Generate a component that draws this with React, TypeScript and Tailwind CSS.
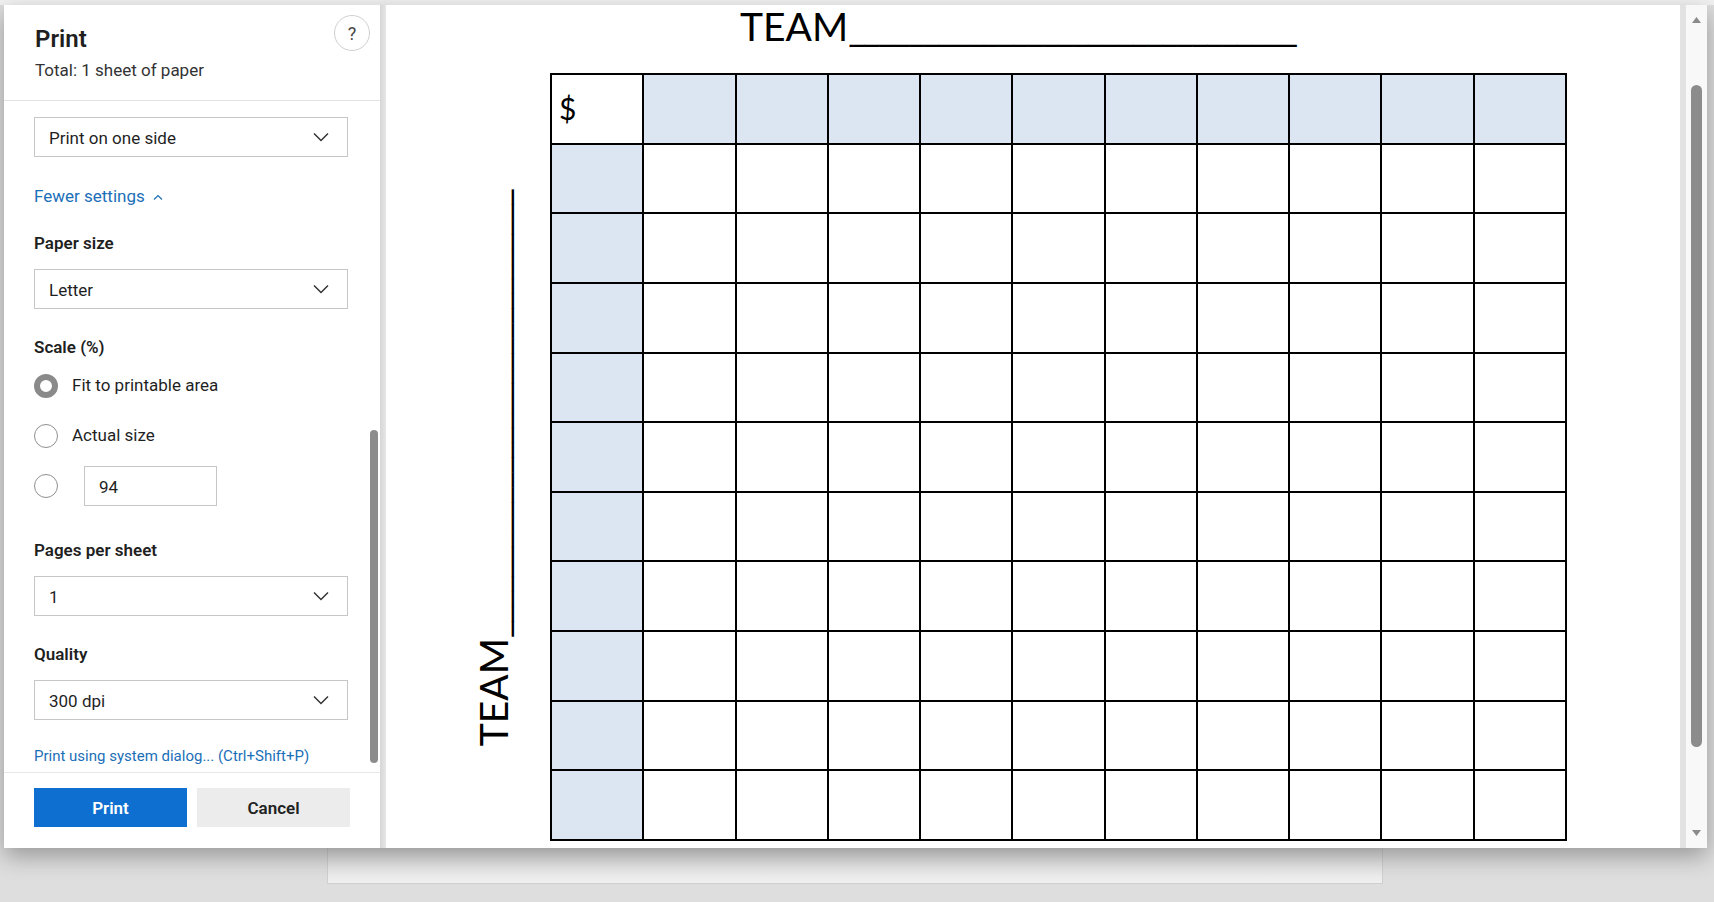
import React from "react";

const UI = "font-['Roboto','Liberation_Sans',sans-serif]";
const DOC = "font-['Lato','Open_Sans',sans-serif]";
const LINE = "______________________________";

function Chevron() {
  return (
    <svg width="16" height="10" viewBox="0 0 16 10" fill="none">
      <polyline points="1,1.5 8,8.5 15,1.5" stroke="#333" strokeWidth="1.5" />
    </svg>
  );
}

function Select({ value }: { value: string }) {
  return (
    <div className="flex h-[40px] w-[314px] items-center justify-between border border-[#c6c6c6] bg-white pl-[14px] pr-[18px] text-[17px] text-[#1f1f1f]">
      <span className="mt-[4px]">{value}</span>
      <Chevron />
    </div>
  );
}

function Label({ children, top = 26 }: { children: React.ReactNode; top?: number }) {
  return (
    <div
      className={`${top === 32 ? "mt-[32px]" : "mt-[26px]"} h-[24px] text-[17px] font-semibold leading-[24px] text-[#1f1f1f]`}
    >
      {children}
    </div>
  );
}

function Radio({ on }: { on?: boolean }) {
  return on ? (
    <div className="h-[24px] w-[24px] rounded-full border-[6px] border-[#8a8a8a] bg-white" />
  ) : (
    <div className="h-[24px] w-[24px] rounded-full border border-[#8f8f8f] bg-white" />
  );
}

function Team() {
  return (
    <>
      TEAM<span className="tracking-[-3px]">{LINE}</span>
    </>
  );
}

export default function App() {
  return (
    <div className={`${UI} relative h-[902px] w-[1714px] overflow-hidden bg-[#dedede]`}>
      <div className="h-[5px] w-full bg-[#f2f2f2]" />
      <div className="relative z-10 ml-[4px] flex h-[843px] w-[1703px] bg-white shadow-[0_8px_22px_rgba(0,0,0,0.32)]">
        {/* settings panel */}
        <div className="flex w-[376px] flex-col">
          <div className="flex h-[95px] justify-between pl-[31px] pr-[10px] pt-[10px]">
            <div className="mt-[8px]">
              <div className="text-[24px] font-semibold leading-[32px] text-[#1f1f1f]">Print</div>
              <div className="mt-[4px] text-[17px] leading-[22px] text-[#333]">Total: 1 sheet of paper</div>
            </div>
            <div className="flex h-[36px] w-[36px] items-center justify-center rounded-full border border-[#cfcfcf] text-[18px] text-[#444]">
              ?
            </div>
          </div>
          <div className="h-px bg-[#e3e3e3]" />
          <div className="flex flex-1 justify-between">
            <div className="w-[344px] pl-[30px] pt-[16px]">
              <Select value="Print on one side" />
              <div className="mt-[28px] flex h-[24px] items-center gap-[8px] text-[17px] text-[#1b6fb8]">
                <span>Fewer settings</span>
                <svg width="10" height="6" viewBox="0 0 10 6" fill="none">
                  <polyline points="1,5.5 5,1.5 9,5.5" stroke="#1b6fb8" strokeWidth="1.2" />
                </svg>
              </div>
              <div className="mt-[22px] h-[24px] text-[17px] font-semibold leading-[24px] text-[#1f1f1f]">Paper size</div>
              <div className="mt-[14px]">
                <Select value="Letter" />
              </div>
              <Label>Scale (%)</Label>
              <div className="mt-[7px] flex flex-col gap-[10px] text-[17px] text-[#1f1f1f]">
                <div className="flex h-[40px] items-center">
                  <Radio on />
                  <span className="ml-[14px]">Fit to printable area</span>
                </div>
                <div className="flex h-[40px] items-center">
                  <Radio />
                  <span className="ml-[14px]">Actual size</span>
                </div>
                <div className="flex h-[40px] items-center">
                  <Radio />
                  <div className="ml-[26px] flex h-[40px] w-[133px] items-center border border-[#c6c6c6] pl-[14px] pt-[3px]">94</div>
                </div>
              </div>
              <Label top={32}>Pages per sheet</Label>
              <div className="mt-[14px]">
                <Select value="1" />
              </div>
              <Label>Quality</Label>
              <div className="mt-[14px]">
                <Select value="300 dpi" />
              </div>
              <div className="mt-[26px] text-[15px] leading-[20px] text-[#1b6fb8]">Print using system dialog... (Ctrl+Shift+P)</div>
            </div>
            <div className="mr-[2px] w-[8px]">
              <div className="mt-[329px] h-[333px] rounded-full bg-[#8c8c8c]" />
            </div>
          </div>
          <div className="h-px bg-[#e8e8e8]" />
          <div className="flex h-[75px] gap-[10px] px-[30px] pt-[15px]">
            <div className="flex h-[39px] flex-1 items-center justify-center bg-[#0f6fd0] pt-[3px] text-[17px] font-semibold text-white">Print</div>
            <div className="flex h-[39px] flex-1 items-center justify-center bg-[#ececec] pt-[3px] text-[17px] font-semibold text-[#222]">Cancel</div>
          </div>
        </div>

        <div className="w-[6px] bg-gradient-to-r from-[#d6d6d6] to-[#e6e6e6]" />

        {/* preview */}
        <div className={`${DOC} flex flex-1 flex-col pt-[2px] text-black`}>
          <div className="ml-[354px] h-[39px] whitespace-nowrap text-[39px] leading-none">
            <Team />
          </div>
          <div className="mt-[27px] flex">
            <div className="ml-[88px] mt-[118px] h-fit rotate-180 whitespace-nowrap text-[39px] leading-none [writing-mode:vertical-rl]">
              <Team />
            </div>
            <div className="ml-[37px] grid h-[768px] w-[1017px] grid-cols-11 grid-rows-11 gap-[2px] border-2 border-black bg-black">
              <div className="flex items-center bg-white pl-[7px] text-[30px]">$</div>
              {Array.from({ length: 10 }).map((_, i) => (
                <div key={"h" + i} className="bg-[#dce6f2]" />
              ))}
              {Array.from({ length: 10 }).map((_, r) =>
                Array.from({ length: 11 }).map((_, c) => (
                  <div key={r + "-" + c} className={c === 0 ? "bg-[#dce6f2]" : "bg-white"} />
                ))
              )}
            </div>
          </div>
        </div>

        {/* preview scrollbar */}
        <div className="flex w-[27px]">
          <div className="w-[6px] bg-[#e2e2e2]" />
          <div className="flex flex-1 flex-col items-center bg-[#f8f8f8] pt-[12px]">
            <svg width="9" height="6" viewBox="0 0 9 6">
              <polygon points="0,6 4.5,0 9,6" fill="#8a8a8a" />
            </svg>
            <div className="mt-[62px] h-[662px] w-[11px] rounded-full bg-[#8c8c8c]" />
            <svg className="mt-[83px]" width="9" height="6" viewBox="0 0 9 6">
              <polygon points="0,0 4.5,6 9,0" fill="#8a8a8a" />
            </svg>
          </div>
        </div>
      </div>
      {/* page of the window behind */}
      <div className="ml-[327px] h-[36px] w-[1056px] border-b border-l border-r border-[#cfcfcf] bg-gradient-to-b from-[#dcdcdc] to-[#f0f0f0]" />
    </div>
  );
}
